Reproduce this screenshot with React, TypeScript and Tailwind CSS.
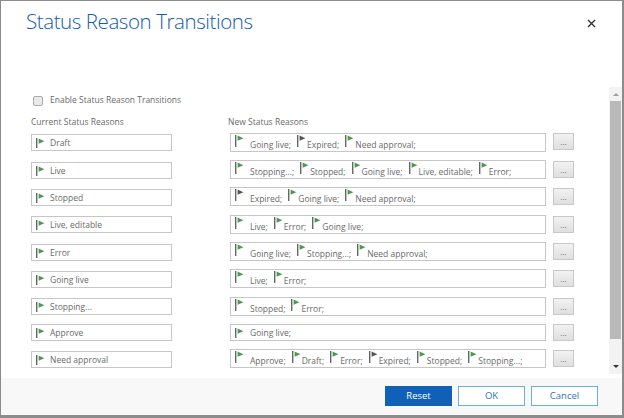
const font = "font-['Open_Sans',sans-serif]";

type Reason = { name: string; grey?: boolean };

type Row = {
  current: string;
  next: Reason[];
  rowClass: string;
  boxClass: string;
  leftClass: string;
  btnClass: string;
  compact?: boolean;
};

const rows: Row[] = [
  { current: "Draft", next: [{ name: "Going live;" }, { name: "Expired;", grey: true }, { name: "Need approval;" }], rowClass: "h-[27px]", boxClass: "h-[19px]", leftClass: "mt-px", btnClass: "" },
  { current: "Live", next: [{ name: "Stopping...;" }, { name: "Stopped;" }, { name: "Going live;" }, { name: "Live, editable;" }, { name: "Error;" }], rowClass: "h-[27px]", boxClass: "h-[19px]", leftClass: "mt-[2px]", btnClass: "mt-px" },
  { current: "Stopped", next: [{ name: "Expired;", grey: true }, { name: "Going live;" }, { name: "Need approval;" }], rowClass: "h-[28px]", boxClass: "h-[19px]", leftClass: "mt-[2px]", btnClass: "mt-px" },
  { current: "Live, editable", next: [{ name: "Live;" }, { name: "Error;" }, { name: "Going live;" }], rowClass: "h-[27px]", boxClass: "h-[19px]", leftClass: "mt-px", btnClass: "mt-px" },
  { current: "Error", next: [{ name: "Going live;" }, { name: "Stopping...;" }, { name: "Need approval;" }], rowClass: "h-[27px]", boxClass: "h-[19px]", leftClass: "mt-[2px]", btnClass: "mt-px" },
  { current: "Going live", next: [{ name: "Live;" }, { name: "Error;" }], rowClass: "h-[28px]", boxClass: "h-[19px]", leftClass: "mt-[2px]", btnClass: "mt-px" },
  { current: "Stopping...", next: [{ name: "Stopped;" }, { name: "Error;" }], rowClass: "h-[27px]", boxClass: "h-[19px]", leftClass: "mt-px", btnClass: "mt-px" },
  { current: "Approve", next: [{ name: "Going live;" }], rowClass: "h-[25px]", boxClass: "h-[17px]", leftClass: "", btnClass: "", compact: true },
  { current: "Need approval", next: [{ name: "Approve;" }, { name: "Draft;" }, { name: "Error;" }, { name: "Expired;", grey: true }, { name: "Stopped;" }, { name: "Stopping...;" }], rowClass: "h-[25px]", boxClass: "h-[19px]", leftClass: "mt-[2px]", btnClass: "mt-px" },
];

function Flag({ grey, small }: { grey?: boolean; small?: boolean }) {
  return (
    <svg width="9" height={small ? 10 : 12} viewBox={small ? "0 0 9 10" : "0 0 9 12"} className="shrink-0">
      <rect x="0" y="0" width="1.4" height={small ? 10 : 12} fill="#666666" />
      <path d="M2.6 0.5 L8.4 3.2 L2.6 5.8 Z" fill={grey ? "#555555" : "#4b9a52"} />
    </svg>
  );
}

function Box({ reasons, compact }: { reasons: Reason[]; compact?: boolean }) {
  if (compact) {
    return (
      <div className="flex items-center pt-px">
        <Flag small />
        <span className="ml-[6px] leading-[12px]">{reasons[0].name}</span>
      </div>
    );
  }
  return (
    <div className="flex items-start">
      {reasons.map((r, i) => (
        <div key={r.name} className={i === 0 ? "flex items-start" : "ml-[6px] flex items-start"}>
          <Flag grey={r.grey} />
          <span className={i === 0 ? "ml-[6px] mt-[3px] leading-[14px]" : "ml-[1px] mt-[3px] leading-[14px]"}>{r.name}</span>
        </div>
      ))}
    </div>
  );
}

export default function App() {
  return (
    <div className={`${font} flex h-[418px] w-[624px] flex-col overflow-hidden border-2 border-b-[3px] border-l-[1px] border-t-[1px] border-[#8c8c8c] bg-white text-[8.5px] text-[#6a6a6a]`}>
      <div className="flex h-[86px] shrink-0 items-start justify-between">
        <h1 className="ml-[25px] mt-[6px] text-[20.5px] font-light leading-[28px] tracking-[-0.42px] text-[#0f5cb0]">Status Reason Transitions</h1>
        <svg width="9" height="9" viewBox="0 0 9 9" className="mr-[26px] mt-[18px]">
          <path d="M1 1 L8 8 M8 1 L1 8" stroke="#333333" strokeWidth="1.4" />
        </svg>
      </div>

      <div className="flex min-h-0 flex-1">
        <div className="min-w-0 flex-1 pl-[30px] pt-[8px]">
          <label className="flex h-[11px] items-center">
            <span className="ml-[2px] h-[10px] w-[10px] rounded-[2px] border border-[#ababab] bg-[#e9e9e9]" />
            <span className="ml-[7px]">Enable Status Reason Transitions</span>
          </label>
          <div className="mt-[10px] flex h-[17px]">
            <span className="w-[197px]">Current Status Reasons</span>
            <span>New Status Reasons</span>
          </div>
          {rows.map((row) => (
            <div key={row.current} className={`flex items-start ${row.rowClass}`}>
              <div className={`flex h-[17px] w-[141px] items-center border border-[#c6c6c6] pl-[4px] ${row.leftClass}`}>
                <Flag small />
                <span className="ml-[5px] leading-[14px]">{row.current}</span>
              </div>
              <div className={`ml-[58px] w-[316px] border border-[#c6c6c6] pl-[4px] pt-px ${row.boxClass}`}>
                <Box reasons={row.next} compact={row.compact} />
              </div>
              <button className={`ml-[7px] h-[17px] w-[21px] border border-[#c8c8c8] bg-linear-to-b from-[#f2f2f2] to-[#dfdfdf] text-[8px] leading-[14px] text-[#666666] ${row.btnClass}`}>...</button>
            </div>
          ))}
        </div>

        <div className="mb-[4px] flex w-[13px] shrink-0 flex-col items-center bg-[#f3f3f3]">
          <div className="flex h-[14px] items-center">
            <div className="h-0 w-0 border-x-[3px] border-b-[3px] border-x-transparent border-b-[#a0a0a0]" />
          </div>
          <div className="h-[238px] w-[11px] bg-[#b9b9b9]" />
          <div className="flex flex-1 items-end pb-[6px]">
            <div className="h-0 w-0 border-x-[3px] border-t-[3px] border-x-transparent border-t-[#333333]" />
          </div>
        </div>
      </div>

      <div className="flex h-[37px] shrink-0 items-start justify-end gap-[6px] bg-[#f8f8f8] pr-[24px] pt-[8px] text-[9.5px]">
        <button className="h-[20px] w-[67px] bg-[#1160b7] text-white">Reset</button>
        <button className="h-[20px] w-[67px] border border-[#6aaee6] bg-white text-[#2f74c0]">OK</button>
        <button className="h-[20px] w-[67px] border border-[#6aaee6] bg-white text-[#2f74c0]">Cancel</button>
      </div>
    </div>
  );
}
